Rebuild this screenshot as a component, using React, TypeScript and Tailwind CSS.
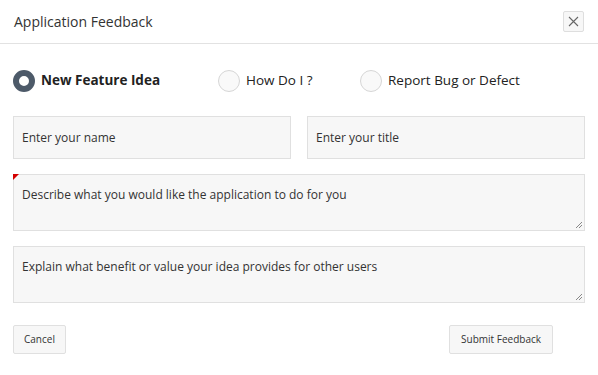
import React from 'react';

const font = { fontFamily: '"Open Sans", "Noto Sans", sans-serif' };

function Radio({ label, checked }: { label: string; checked?: boolean }) {
  return (
    <label className="flex items-center gap-[6px]">
      {checked ? (
        <span className="w-[22px] h-[22px] rounded-full border-[6px] border-[#4d5a69] bg-white" />
      ) : (
        <span className="w-[22px] h-[22px] rounded-full border border-[#d6d6d6] bg-[#f9f9f9]" />
      )}
      <span className={`text-[13.5px] text-[#222] ${checked ? 'font-bold' : ''}`}>{label}</span>
    </label>
  );
}

export default function App() {
  return (
    <div className="w-[598px] h-[375px] bg-white text-[#333] overflow-hidden" style={font}>
      {/* Header */}
      <div className="h-[44px] flex items-center justify-between pl-[14px] pr-[14px] border-b border-[#e2e2e2]">
        <h1 className="text-[14px] text-[#333]">Application Feedback</h1>
        <button className="w-[21px] h-[21px] flex items-center justify-center bg-[#f7f7f7] border border-[#dedede] rounded-[2px]">
          <svg width="11" height="11" viewBox="0 0 11 11" fill="none" stroke="#666" strokeWidth="1.1">
            <path d="M1 1 L10 10 M10 1 L1 10" />
          </svg>
        </button>
      </div>

      <div className="px-[13px] pt-[25px]">
        {/* Type radios */}
        <div className="flex items-center h-[23px]">
          <div className="w-[205px]"><Radio label="New Feature Idea" checked /></div>
          <div className="w-[142px]"><Radio label="How Do I ?" /></div>
          <Radio label="Report Bug or Defect" />
        </div>

        {/* Name / title */}
        <div className="grid grid-cols-2 gap-[16px] mt-[24px]">
          <div className="h-[43px] flex items-center px-[8px] bg-[#f7f7f7] border border-[#e0e0e0] text-[12px] text-[#333]">
            Enter your name
          </div>
          <div className="h-[43px] flex items-center px-[8px] bg-[#f7f7f7] border border-[#e0e0e0] text-[12px] text-[#333]">
            Enter your title
          </div>
        </div>

        {/* Textareas */}
        <div className="relative mt-[15px] h-[57px] bg-[#f7f7f7] border border-[#e0e0e0] px-[8px] pt-[11px] text-[12px] text-[#333]">
          <span className="absolute left-[-1px] top-[-1px] w-0 h-0 border-t-[6px] border-t-[#d40000] border-r-[6px] border-r-transparent" />
          Describe what you would like the application to do for you
          <svg className="absolute right-[1px] bottom-[1px]" width="8" height="8" viewBox="0 0 8 8" stroke="#888" strokeWidth="1">
            <path d="M7 1 L1 7 M7 4 L4 7" />
          </svg>
        </div>
        <div className="relative mt-[15px] h-[57px] bg-[#f7f7f7] border border-[#e0e0e0] px-[8px] pt-[11px] text-[12px] text-[#333]">
          Explain what benefit or value your idea provides for other users
          <svg className="absolute right-[1px] bottom-[1px]" width="8" height="8" viewBox="0 0 8 8" stroke="#888" strokeWidth="1">
            <path d="M7 1 L1 7 M7 4 L4 7" />
          </svg>
        </div>

        {/* Actions */}
        <div className="flex items-center justify-between mt-[22px] pr-[32px]">
          <button className="h-[29px] px-[10px] bg-[#f7f7f7] border border-[#e0e0e0] rounded-[2px] text-[10px] text-[#333]">
            Cancel
          </button>
          <button className="h-[29px] px-[11px] bg-[#f7f7f7] border border-[#e0e0e0] rounded-[2px] text-[10px] text-[#333]">
            Submit Feedback
          </button>
        </div>
      </div>
    </div>
  );
}
